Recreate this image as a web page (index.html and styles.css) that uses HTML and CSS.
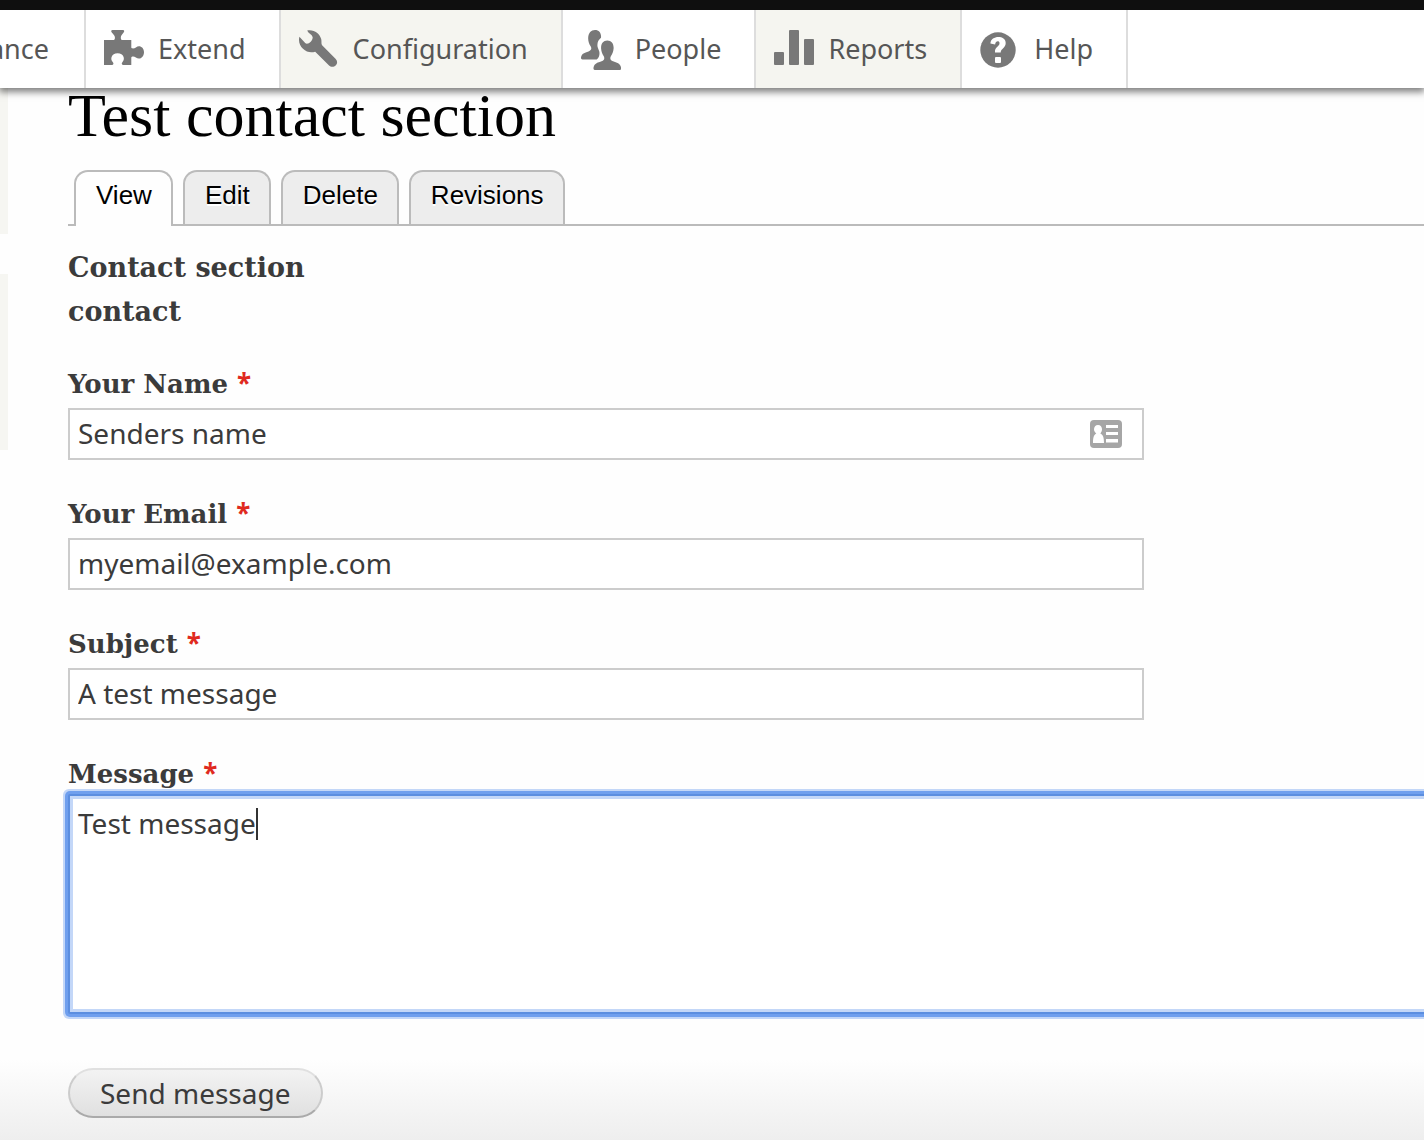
FILE: index.html
```html
<!DOCTYPE html>
<html lang="en">
<head>
<meta charset="utf-8">
<meta name="viewport" content="width=device-width, initial-scale=1">
<title>Test contact section</title>
<link rel="stylesheet" href="styles.css">
</head>
<body>
<header class="toolbar">
  <nav class="toolbar-menu" aria-label="Administration">
    <a class="menu-item menu-item-cut" href="#"><span class="menu-text">ance</span></a>
    <a class="menu-item" href="#">
      <svg class="menu-icon" viewBox="0 0 40 40" aria-hidden="true"><path d="M8.500 0h10.500c1.300 0 1.500 1.300.8 2.300L17.500 5.200c-1 1.500-.9 4.600.5 4.800h9.300v7.600c.4 1.300 3 1.200 4.600-.2 3.300-2.800 8.100-.3 8.100 4.800s-4.500 8.100-8.100 5.300c-1.600-1.300-4.200-1.400-4.600 0V35H19c-1.500-.2-1.600-1.900-.5-3 2.800-2.600 1.500-8.700-4.900-8.700S6 29.400 8.700 32c1.200 1.100 1 2.800-.5 3H0V10h9.700c1.500-.2 1.600-3.300.4-4.800L7.600 2.300C6.900 1.300 7.200 0 8.500 0z"/></svg>
      <span class="menu-text">Extend</span>
    </a>
    <a class="menu-item menu-item-shaded" href="#">
      <svg class="menu-icon" viewBox="0 0 40 40" aria-hidden="true"><path d="M8.200.4C15-.8 20.500 3 22.200 9c.6 2.300-.2 5 .9 6.200l13.400 13.600c4.700 4.800-2 11-6.700 6.500L16.200 21.700C12 22.800 7.500 22.300 4 18.800.8 15.700-.8 11.600.4 6.700l5.800 6.400c2.600 2.700 8.200-2.700 7.400-6.200C12.600 3.700 9.600 3.800 8.200.4z"/></svg>
      <span class="menu-text">Configuration</span>
    </a>
    <a class="menu-item" href="#">
      <svg class="menu-icon" viewBox="0 0 40 40" aria-hidden="true"><path d="M14 0c4.200 0 6.500 3.200 6 7.800-2.700 2.200-4.300 5.500-3.300 9.400.6 2.300 1.800 3.700 1.800 5.800 0 2.600-.7 5.200-2.800 6.500H1.500C.2 29.500-.2 28.200.1 27c.7-3.500 3.400-4.400 7.400-5.600 3.100-1 3.400-3.400 2-5.500C8 13.700 7 10.700 7.200 7.600 7.400 2.900 10 0 14 0z"/><path d="M26.300 10.500c4.300 0 6.600 3.400 6.300 8-.2 3-1.400 5.600-2.600 7.500-1.300 2.200-.8 4.200 2 5.300 3.600 1.200 7.400 2 8 6.200.2 1.500-.3 2.500-1 2.500H13.700c-.9 0-1.500-.9-1.100-2.700.8-4 4.500-4.800 8-6 2.800-1.100 3.300-3.100 2-5.300-1.200-1.900-2.300-4.500-2.500-7.500-.3-4.600 2-8 6.200-8z"/></svg>
      <span class="menu-text">People</span>
    </a>
    <a class="menu-item menu-item-shaded" href="#">
      <svg class="menu-icon" viewBox="0 0 40 40" aria-hidden="true"><rect y="22" width="10" height="13" rx="1"/><rect x="15" width="10" height="35" rx="1"/><rect x="30" y="9" width="10" height="26" rx="1"/></svg>
      <span class="menu-text">Reports</span>
    </a>
    <a class="menu-item" href="#">
      <svg class="menu-icon" viewBox="0 0 40 40" aria-hidden="true"><circle cx="18" cy="20" r="17.700"/><path class="icon-mark" d="M10.400 13.500C10.800 5 25.700 5 25.700 13c0 5-5 5.700-5 9.500H15c-.5-6 4.500-5.800 4.500-9.300 0-2.800-4-2.700-4.400 1.200z"/><rect class="icon-mark" x="15" y="27" width="6" height="6" rx="1"/></svg>
      <span class="menu-text">Help</span>
    </a>
  </nav>
</header>
<div class="page">
  <aside class="sidebar">
    <div class="block block-first"></div>
    <div class="block"></div>
  </aside>
  <main class="content">
    <h1 class="page-title">Test contact section</h1>
    <nav class="tabs" aria-label="Tabs">
      <a class="tab tab-active" href="#">View</a>
      <a class="tab" href="#">Edit</a>
      <a class="tab" href="#">Delete</a>
      <a class="tab" href="#">Revisions</a>
    </nav>
    <div class="section-heading">
      <div>Contact section</div>
      <div>contact</div>
    </div>
    <form class="contact-form">
      <div class="field">
        <label class="label" for="name">Your Name <span class="required">*</span></label>
        <div class="control">
          <input class="text-box" id="name" type="text" value="Senders name">
          <svg class="card-icon" viewBox="0 0 32 28" aria-hidden="true"><rect width="32" height="28" rx="4"/><path class="icon-mark" d="M8 5c2.600 0 4 2 4 4.300 0 2-1 3.500-1.700 4.300 2.700 1 3.700 4 3.700 9.400H3c0-5.400 1-8.400 3.300-9.400C5.300 12.800 4 11.300 4 9.300 4 7 5.500 5 8 5zM16 5h12v3H16zM16 12h12v3H16zM16 19h12v3.500H16z"/></svg>
        </div>
      </div>
      <div class="field">
        <label class="label" for="email">Your Email <span class="required">*</span></label>
        <div class="control"><input class="text-box" id="email" type="email" value="myemail@example.com"></div>
      </div>
      <div class="field">
        <label class="label" for="subject">Subject <span class="required">*</span></label>
        <div class="control"><input class="text-box" id="subject" type="text" value="A test message"></div>
      </div>
      <div class="field">
        <label class="label" for="message">Message <span class="required">*</span></label>
        <div class="message-control">
          <textarea class="message-box" id="message">Test message</textarea>
          <span class="caret"></span>
        </div>
      </div>
      <button class="send-button" type="button">Send message</button>
    </form>
  </main>
</div>
</body>
</html>
```
FILE: styles.css
```css
* {
  box-sizing: border-box;
}

body {
  margin: 0;
  overflow-x: clip;
  background: #fefefe;
  color: #3b3b3b;
  font-family: "Noto Sans", sans-serif;
  font-size: 28px;
}

.toolbar {
  position: relative;
  z-index: 1;
  border-top: 10px solid #0f0f0f;
  background: #fff;
  box-shadow: 0 3px 7px 1px rgba(0, 0, 0, 0.5);
}

.toolbar-menu {
  display: flex;
  height: 78px;
}

.menu-item {
  display: flex;
  flex: none;
  align-items: center;
  gap: 14px;
  padding: 2px 33px 0 18px;
  border-right: 2px solid #ddd;
  color: #565656;
  font-size: 27px;
  text-decoration: none;
}

.menu-item-cut {
  justify-content: flex-end;
  width: 86px;
  padding-right: 35px;
  overflow: hidden;
}

.menu-item-shaded {
  background: #f5f5f0;
}

.menu-text {
  padding-bottom: 4px;
}

.menu-icon {
  width: 40px;
  height: 40px;
  fill: #787878;
}

.icon-mark {
  fill: #fff;
}

.page {
  display: grid;
  grid-template-columns: 8px minmax(0, 1fr);
  column-gap: 60px;
  background: linear-gradient(#fefefe, #eee) bottom / 100% 80px no-repeat;
}

.sidebar {
  display: flex;
  flex-direction: column;
  gap: 40px;
}

.block {
  height: 176px;
  background: #f6f6f2;
}

.block-first {
  height: 146px;
}

.page-title {
  margin: 0 0 28px;
  color: #000;
  font-family: "Liberation Serif", serif;
  font-size: 62px;
  font-weight: 400;
  line-height: 54px;
}

.tabs {
  display: flex;
  gap: 10px;
  height: 56px;
  padding-left: 6px;
  border-bottom: 2px solid #bbb;
}

.tab {
  padding: 0 19px 0 20px;
  border: 2px solid #bbb;
  border-bottom: 0;
  border-radius: 14px 14px 0 0;
  background: #ededed;
  color: #000;
  font-family: "Liberation Sans", sans-serif;
  font-size: 26px;
  line-height: 46px;
  text-decoration: none;
  text-shadow: 0 2px 0 #fff;
}

.tab-active {
  height: 56px;
  background: #fefefe;
}

.section-heading {
  padding: 20px 0 30px;
  font-family: "DejaVu Serif", serif;
  font-size: 27px;
  font-weight: 700;
  line-height: 44px;
}

.field {
  margin-bottom: 34px;
}

.label {
  display: block;
  font-family: "DejaVu Serif", serif;
  font-size: 26px;
  font-weight: 700;
  line-height: 40px;
}

.required {
  color: #e02a20;
  font-family: "Noto Sans", sans-serif;
  line-height: 1;
}

.control {
  position: relative;
  max-width: 1076px;
  padding-top: 4px;
}

.text-box,
.message-box {
  display: block;
  width: 100%;
  border: 2px solid #ccc;
  border-radius: 0;
  background: #fff;
  color: #3b3b3b;
  font: inherit;
  outline: 0;
}

.text-box {
  height: 52px;
  padding: 0 8px 2px;
}

.card-icon {
  position: absolute;
  top: 16px;
  right: 22px;
  width: 32px;
  height: 28px;
  fill: #a6a6a6;
}

.message-control {
  position: relative;
  margin-right: -10px;
}

.message-box {
  height: 220px;
  padding: 8px;
  border-color: #5b8ee0;
  border-radius: 2px;
  box-shadow: 0 0 0 3px #6f9fee, 0 0 0 5px #c3d7f8, inset 0 0 0 3px #c3d7f8;
  line-height: 38px;
  resize: none;
}

.caret {
  position: absolute;
  top: 14px;
  left: 188px;
  width: 2px;
  height: 32px;
  background: #333;
}

.send-button {
  display: block;
  height: 50px;
  margin: 54px 0 22px;
  padding: 0 30px;
  border: 2px solid #ccc;
  border-top-color: #e0e0e0;
  border-bottom-color: #aaa;
  border-radius: 25px;
  background: linear-gradient(#f3f3f3, #e0e0e0);
  color: #3b3b3b;
  font: inherit;
}
```
